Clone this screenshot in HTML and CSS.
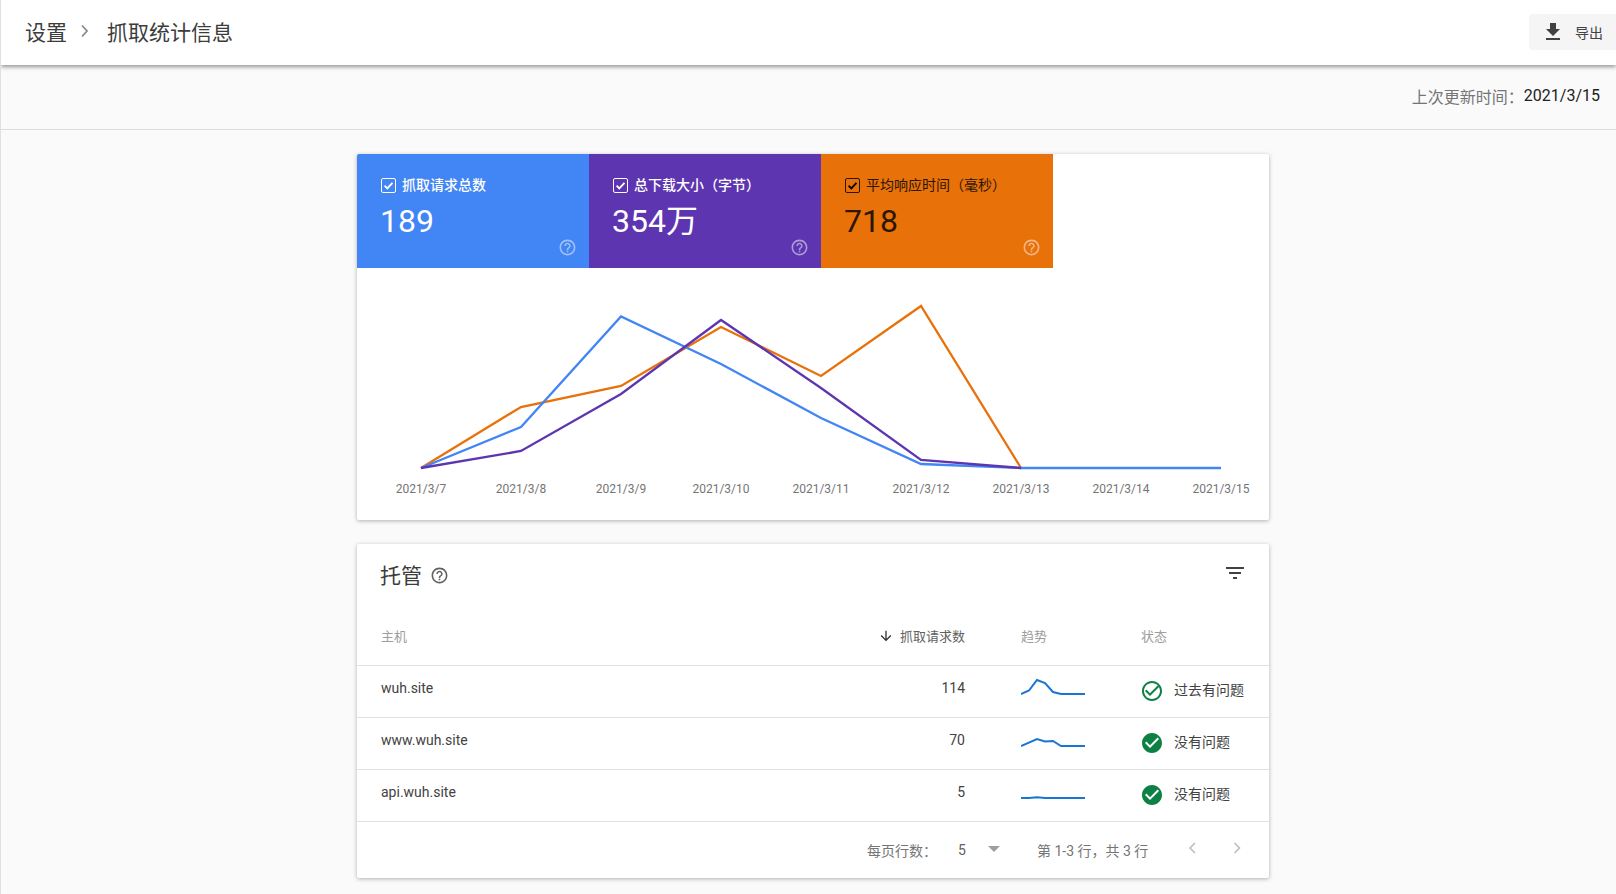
FILE: index.html
```html
<!DOCTYPE html>
<html lang="zh-CN">
<head>
<meta charset="utf-8">
<title>抓取统计信息</title>
<link rel="stylesheet" href="styles.css">
</head>
<body>
<svg class="defs" width="0" height="0" aria-hidden="true">
  <defs>
    <symbol id="i-help" viewBox="0 0 24 24"><path d="M11 18h2v-2h-2v2zm1-16C6.48 2 2 6.48 2 12s4.48 10 10 10 10-4.48 10-10S17.52 2 12 2zm0 18c-4.41 0-8-3.59-8-8s3.59-8 8-8 8 3.59 8 8-3.59 8-8 8zm0-14c-2.21 0-4 1.79-4 4h2c0-1.1.9-2 2-2s2 .9 2 2c0 2-3 1.75-3 5h2c0-2.25 3-2.5 3-5 0-2.21-1.79-4-4-4z"/></symbol>
    <symbol id="i-check" viewBox="0 0 13 13"><path d="M2.6 6.6l2.7 2.7 5.2-5.4" fill="none" stroke-width="1.9"/></symbol>
    <symbol id="i-ok" viewBox="0 0 24 24"><path d="M12 2C6.48 2 2 6.48 2 12s4.48 10 10 10 10-4.48 10-10S17.52 2 12 2zm-2 15l-5-5 1.41-1.41L10 14.17l7.59-7.59L19 8l-9 9z"/></symbol>
    <symbol id="i-past" viewBox="0 0 24 24"><path d="M12 2C6.48 2 2 6.48 2 12s4.48 10 10 10 10-4.48 10-10S17.52 2 12 2zm0 18c-4.41 0-8-3.59-8-8s3.59-8 8-8 8 3.59 8 8-3.59 8-8 8zm-2-3l-5-5 1.41-1.41L10 14.17l7.59-7.59L19 8l-9 9z"/></symbol>
  </defs>
</svg>

<header class="topbar">
  <nav class="crumbs">
    <span>设置</span>
    <svg class="crumb-sep" width="24" height="24" viewBox="0 0 24 24"><path d="M9 6.5l5 5.5-5 5.5" fill="none" stroke="#8a8a8a" stroke-width="1.8"/></svg>
    <span>抓取统计信息</span>
  </nav>
  <button class="export">
    <svg width="24" height="24" viewBox="0 0 24 24"><path d="M19 9h-4V3H9v6H5l7 7 7-7zM5 18v2h14v-2H5z" fill="#424242"/></svg>
    <span>导出</span>
  </button>
</header>

<div class="updated"><span class="updated-label">上次更新时间：</span><span class="updated-value">2021/3/15</span></div>

<main class="main">
  <section class="card">
    <div class="tiles">
      <div class="tile tile-blue">
        <div class="tile-label"><span class="box"><svg width="13" height="13"><use href="#i-check"/></svg></span>抓取请求总数</div>
        <div class="tile-num">189</div>
        <svg class="tile-help" width="19" height="19"><use href="#i-help"/></svg>
      </div>
      <div class="tile tile-purple">
        <div class="tile-label"><span class="box"><svg width="13" height="13"><use href="#i-check"/></svg></span>总下载大小（字节）</div>
        <div class="tile-num">354万</div>
        <svg class="tile-help" width="19" height="19"><use href="#i-help"/></svg>
      </div>
      <div class="tile tile-orange">
        <div class="tile-label"><span class="box"><svg width="13" height="13"><use href="#i-check"/></svg></span>平均响应时间（毫秒）</div>
        <div class="tile-num">718</div>
        <svg class="tile-help" width="19" height="19"><use href="#i-help"/></svg>
      </div>
    </div>
    <svg class="chart" width="912" height="206" viewBox="0 0 912 206">
      <polyline class="ln ln-orange" points="64,200 164,139 264,118 364,59 464,108 564,38 664,200"/>
      <polyline class="ln ln-blue" points="64,200 164,159 264,48.5 364,96 464,150 564,196 664,200 864,200"/>
      <polyline class="ln ln-purple" points="64,200 164,183 264,126 364,52 464,120 564,192 664,200"/>
    </svg>
    <div class="axis">
      <span>2021/3/7</span><span>2021/3/8</span><span>2021/3/9</span><span>2021/3/10</span><span>2021/3/11</span><span>2021/3/12</span><span>2021/3/13</span><span>2021/3/14</span><span>2021/3/15</span>
    </div>
  </section>

  <section class="card">
    <div class="card-head">
      <h2 class="card-title">托管</h2>
      <svg class="title-help" width="19" height="19"><use href="#i-help"/></svg>
      <svg class="filter" width="24" height="24" viewBox="0 0 24 24"><path d="M10 18h4v-2h-4v2zM3 6v2h18V6H3zm3 7h12v-2H6v2z" fill="#424242"/></svg>
    </div>
    <div class="row row-head">
      <span class="name">主机</span>
      <span class="sort"><svg width="16" height="16" viewBox="0 0 24 24"><path d="M20 12l-1.41-1.41L13 16.17V4h-2v12.17l-5.58-5.59L4 12l8 8 8-8z" fill="#333"/></svg>抓取请求数</span>
      <span class="col-trend">趋势</span>
      <span class="col-status">状态</span>
    </div>
    <div class="row">
      <span class="name">wuh.site</span>
      <span class="count">114</span>
      <svg class="spark col-trend" width="64" height="20"><polyline points="0,17 8,13.5 16,3 24,6 32,15 40,17 64,17"/></svg>
      <span class="status col-status"><svg class="ok" width="24" height="24"><use href="#i-past"/></svg><span class="status-text">过去有问题</span></span>
    </div>
    <div class="row">
      <span class="name">www.wuh.site</span>
      <span class="count">70</span>
      <svg class="spark col-trend" width="64" height="20"><polyline points="0,17 16,10 24,12.5 32,12 40,17 64,17"/></svg>
      <span class="status col-status"><svg class="ok" width="24" height="24"><use href="#i-ok"/></svg><span class="status-text">没有问题</span></span>
    </div>
    <div class="row">
      <span class="name">api.wuh.site</span>
      <span class="count">5</span>
      <svg class="spark col-trend" width="64" height="20"><polyline points="0,17 8,17 16,16.3 24,17 64,17"/></svg>
      <span class="status col-status"><svg class="ok" width="24" height="24"><use href="#i-ok"/></svg><span class="status-text">没有问题</span></span>
    </div>
    <div class="pager">
      <span class="pager-label">每页行数：</span>
      <span class="pager-size">5</span>
      <svg class="caret" width="12" height="6" viewBox="0 0 12 6"><path d="M0 0h12L6 6z" fill="#9e9e9e"/></svg>
      <span class="pager-range">第 1-3 行，共 3 行</span>
      <svg class="nav" width="24" height="24" viewBox="0 0 24 24"><path d="M15 7l-5 5 5 5" fill="none" stroke="#bdbdbd" stroke-width="1.6"/></svg>
      <svg class="nav nav-next" width="24" height="24" viewBox="0 0 24 24"><path d="M9.5 7l5 5-5 5" fill="none" stroke="#bdbdbd" stroke-width="1.6"/></svg>
    </div>
  </section>
</main>
</body>
</html>
```

FILE: styles.css
```css
* { box-sizing: border-box; }
html, body { margin: 0; padding: 0; }
body {
  height: 894px;
  overflow: hidden;
  background: #fafafa;
  border-left: 1px solid #e0e0e0;
  font-family: Roboto, "Noto Sans CJK SC", sans-serif;
  color: #424242;
}
.defs { position: absolute; }

.topbar {
  position: relative;
  z-index: 2;
  height: 65px;
  background: #fff;
  box-shadow: 0 2px 4px rgba(0, 0, 0, .4);
  display: flex;
  align-items: center;
  justify-content: space-between;
  padding-left: 24px;
}
.crumbs {
  display: flex;
  align-items: center;
  height: 65px;
  padding-bottom: 4px;
  font-size: 21px;
  color: #3c3c3c;
}
.crumb-sep { margin: 0 10px 0 6px; }
.export {
  display: flex;
  align-items: center;
  width: 87px;
  height: 36px;
  margin-top: -1px;
  padding: 0 0 0 12px;
  border: 0;
  border-radius: 4px 0 0 4px;
  background: #f5f5f5;
  font: 14px Roboto, "Noto Sans CJK SC", sans-serif;
  color: #424242;
}
.export span { margin-left: 10px; }

.updated {
  height: 65px;
  border-bottom: 1px solid #dcdcdc;
  display: flex;
  align-items: center;
  justify-content: flex-end;
  padding: 0 16px 3px 0;
  font-size: 16px;
}
.updated-label { color: #757575; }
.updated-value { color: #212121; }

.main {
  display: flex;
  flex-direction: column;
  align-items: center;
  gap: 24px;
  padding: 24px 0 0 9px;
}
.card {
  width: 912px;
  background: #fff;
  border-radius: 2px;
  box-shadow: 0 1px 4px rgba(0, 0, 0, .3);
}

.tiles { display: flex; }
.tile {
  position: relative;
  width: 232px;
  height: 114px;
  padding: 22px 0 0 24px;
  color: #fff;
  fill: #fff;
}
.tile-blue { background: #4285f4; border-top-left-radius: 2px; }
.tile-purple { background: #5e35b1; }
.tile-orange { background: #e8710a; color: #2a1603; }
.tile-label {
  display: flex;
  align-items: center;
  height: 18px;
  font-size: 14px;
  line-height: 18px;
  font-weight: 500;
}
.tile-orange .tile-label { font-weight: 400; }
.box {
  display: flex;
  flex: none;
  width: 15px;
  height: 15px;
  margin: 1px 6px 0 0;
  border: 1.5px solid currentColor;
  border-radius: 2px;
  fill: none;
  stroke: #fff;
}
.box svg { margin: -.5px; }
.tile-orange .box { stroke: #000; }
.tile-num {
  margin: 8px 0 0 -1px;
  font-size: 32px;
  line-height: 38px;
}
.tile-help {
  position: absolute;
  right: 12px;
  bottom: 11px;
  opacity: .5;
}
.chart { display: block; }
.ln { fill: none; stroke-width: 2.3; stroke-linejoin: miter; }
.ln-orange { stroke: #e8710a; }
.ln-blue { stroke: #4285f4; }
.ln-purple { stroke: #5e35b1; }
.axis {
  display: grid;
  grid-template-columns: repeat(9, 100px);
  height: 46px;
  padding: 5px 0 0 14px;
  font-size: 12px;
  line-height: 20px;
  color: #757575;
  text-align: center;
}

.card-head {
  display: flex;
  align-items: center;
  height: 64px;
  padding: 0 22px 0 23px;
}
.card-title {
  margin: -4px 0 0;
  font-size: 21px;
  font-weight: 400;
  color: #3c3c3c;
}
.title-help { margin: -1px 0 0 8px; fill: #616161; }
.filter { margin: -7px 0 0 auto; }

.row {
  display: grid;
  grid-template-columns: 584px 56px 120px 128px;
  align-items: center;
  height: 52px;
  padding-left: 24px;
  border-bottom: 1px solid #e0e0e0;
  font-size: 14px;
  color: #424242;
}
.name { grid-column: 1; grid-row: 1; padding-bottom: 8px; }
.count { grid-column: 1; grid-row: 1; justify-self: end; padding-bottom: 8px; }
.sort { grid-column: 1; grid-row: 1; justify-self: end; }
.col-trend { grid-column: 3; }
.col-status { grid-column: 4; }
.row-head {
  height: 58px;
  padding-bottom: 2px;
  font-size: 13px;
  color: #9e9e9e;
}
.row-head .name { padding-bottom: 0; }
.sort {
  display: flex;
  align-items: center;
  gap: 6px;
  color: #616161;
}
.spark { margin-bottom: 10px; fill: none; stroke: #1976d2; stroke-width: 2; }
.status {
  display: flex;
  align-items: center;
  gap: 10px;
  font-size: 14px;
  color: #424242;
}
.status-text { margin-top: -6px; }
.ok { flex: none; margin: -2px 0 0 -1px; fill: #0d8043; }

.pager {
  display: flex;
  align-items: center;
  height: 56px;
  padding-left: 510px;
  font-size: 14px;
  color: #757575;
}
.pager-label { width: 91px; }
.pager-size { width: 30px; margin-top: -1px; color: #616161; }
.caret { margin: -2px 37px 0 0; }
.pager-range { width: 144px; }
.nav { margin: -5px 0 0 -1px; }
.nav-next { margin-left: 21px; }
```
